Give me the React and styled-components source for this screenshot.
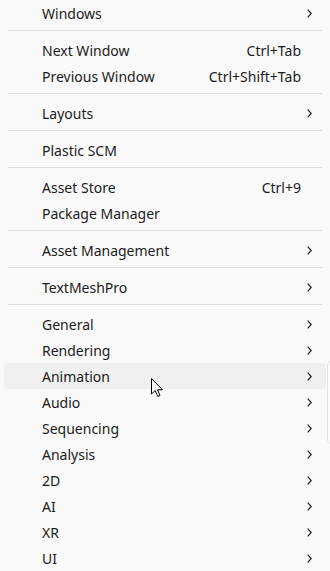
import React from "react";
import styled, { createGlobalStyle } from "styled-components";

const GlobalStyle = createGlobalStyle`
  html, body {
    margin: 0;
    padding: 0;
    background: #f9f9f9;
    overflow: hidden;
  }
`;

const Menu = styled.div`
  position: relative;
  width: 330px;
  height: 571px;
  background: #f9f9f9;
  font-family: "Noto Sans", "Open Sans", sans-serif;
  font-size: 14px;
  color: #1b1b1b;
  display: flex;
  flex-direction: column;
  overflow: hidden;
`;

const Item = styled.div`
  height: 26px;
  margin: 0 4px;
  padding: 0 14px 0 38px;
  border-radius: 4px;
  display: flex;
  align-items: center;
  background: ${(p) => (p.$hover ? "#f0f0f0" : "transparent")};
  flex-shrink: 0;
`;

const Label = styled.span`
  flex: 1;
  white-space: nowrap;
`;

const Shortcut = styled.span`
  white-space: nowrap;
  margin-right: 11px;
`;

const Chevron = styled.svg`
  width: 5px;
  height: 9px;
  margin-left: 8px;
`;

const Separator = styled.div`
  height: 1px;
  margin: 4px 8px 6px;
  background: #dcdcdc;
  flex-shrink: 0;
`;

const SubmenuEdge = styled.div`
  position: absolute;
  left: 327px;
  top: 360px;
  width: 20px;
  height: 83px;
  background: #fbfbfb;
  border: 1px solid #e3e3e3;
  border-radius: 6px;
`;

const Cursor = styled.svg`
  position: absolute;
  left: 151px;
  top: 378px;
  width: 13px;
  height: 20px;
`;

const sections = [
  [{ label: "Windows", sub: true }],
  [
    { label: "Next Window", key: "Ctrl+Tab" },
    { label: "Previous Window", key: "Ctrl+Shift+Tab" },
  ],
  [{ label: "Layouts", sub: true }],
  [{ label: "Plastic SCM" }],
  [
    { label: "Asset Store", key: "Ctrl+9" },
    { label: "Package Manager" },
  ],
  [{ label: "Asset Management", sub: true }],
  [{ label: "TextMeshPro", sub: true }],
  [
    { label: "General", sub: true },
    { label: "Rendering", sub: true },
    { label: "Animation", sub: true, hover: true },
    { label: "Audio", sub: true },
    { label: "Sequencing", sub: true },
    { label: "Analysis", sub: true },
    { label: "2D", sub: true },
    { label: "AI", sub: true },
    { label: "XR", sub: true },
    { label: "UI", sub: true },
  ],
];

function Arrow() {
  return (
    <Chevron viewBox="0 0 5 9">
      <path d="M0.7 0.7 L4.2 4.5 L0.7 8.3" fill="none" stroke="#1b1b1b" strokeWidth="1.2" />
    </Chevron>
  );
}

export default function App() {
  return (
    <>
      <GlobalStyle />
      <Menu>
        {sections.map((items, i) => (
          <React.Fragment key={i}>
            {i > 0 && <Separator />}
            {items.map((it) => (
              <Item key={it.label} $hover={it.hover}>
                <Label>{it.label}</Label>
                {it.key && <Shortcut>{it.key}</Shortcut>}
                {it.sub && <Arrow />}
              </Item>
            ))}
          </React.Fragment>
        ))}
        <SubmenuEdge />
        <Cursor viewBox="0 0 13 20">
          <path
            d="M0.5 0.5 L0.5 16 L4.2 12.5 L6.8 18.5 L9 17.5 L6.5 11.8 L11.5 11.8 Z"
            fill="#fff"
            stroke="#000"
            strokeWidth="1"
            strokeLinejoin="round"
          />
        </Cursor>
      </Menu>
    </>
  );
}
